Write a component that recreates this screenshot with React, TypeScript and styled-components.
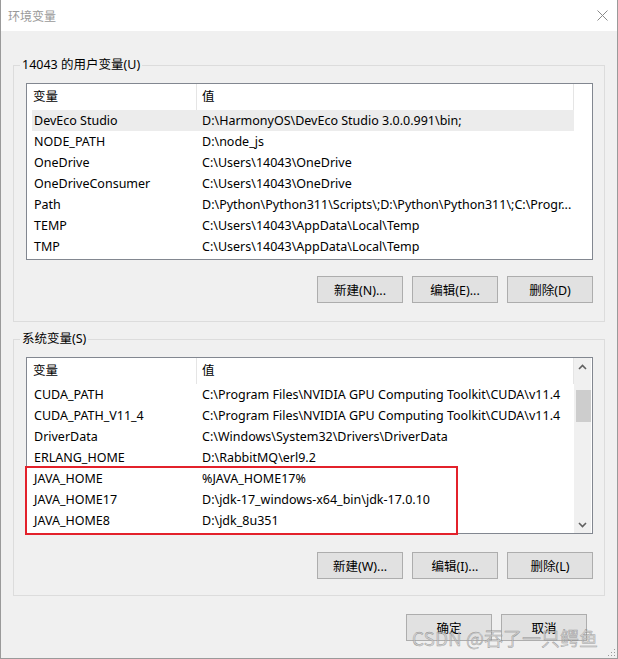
import styled, { createGlobalStyle } from 'styled-components'

const GlobalStyle = createGlobalStyle`
  html, body {
    margin: 0;
    padding: 0;
    background: #ffffff;
  }
  body {
    font-family: "Noto Sans", "Noto Sans CJK SC", sans-serif;
    font-size: 12.5px;
    color: #000000;
  }
`

const Window = styled.div`
  position: relative;
  width: 618px;
  height: 659px;
  box-sizing: border-box;
  border-left: 1px solid #9a9a9a;
  border-right: 1px solid #9a9a9a;
  border-bottom: 1px solid #9a9a9a;
  background: #f0f0f0;
  display: flex;
  flex-direction: column;
`

const TitleBar = styled.div`
  height: 31px;
  flex: none;
  background: #ffffff;
  display: flex;
  align-items: center;
  justify-content: space-between;
  padding: 0 9px 0 7px;
`

const TitleText = styled.span`
  color: #999999;
  font-size: 12px;
  line-height: 16px;
  font-family: "Noto Sans CJK SC", sans-serif;
`

const Body = styled.div`
  flex: 1;
  padding: 26px 12px 0 12px;
  display: flex;
  flex-direction: column;
`

const Group = styled.fieldset<{ $gap?: number }>`
  margin: ${(p) => p.$gap ?? 0}px 0 0 0;
  width: 592px;
  min-width: 0;
  box-sizing: border-box;
  border: 1px solid #dcdcdc;
  padding: 10px 11px ${(p) => (p.$gap ? 16 : 18)}px 12px;
`

const Legend = styled.legend`
  margin-left: -6px;
  padding: 0 2px;
  line-height: 16px;
  font-size: 12.5px;
  font-family: "Noto Sans", "Noto Sans CJK SC", sans-serif;
`

const List = styled.div`
  position: relative;
  height: 177px;
  box-sizing: border-box;
  border: 1px solid #828790;
  background: #ffffff;
  display: flex;
`

const ListContent = styled.div`
  width: 547px;
  flex: none;
  padding-bottom: 2px;
`

const HeaderRow = styled.div`
  display: flex;
  height: 26px;
`

const HeaderCell = styled.div<{ $w?: number; $pad: number }>`
  ${(p) => (p.$w ? `width: ${p.$w}px; flex: none;` : 'flex: 1;')}
  box-sizing: border-box;
  border-right: 1px solid #e5e5e5;
  padding-left: ${(p) => p.$pad}px;
  line-height: 26px;
  white-space: nowrap;
`

const Row = styled.div<{ $selected?: boolean }>`
  display: flex;
  height: 21px;
  margin-left: 5px;
  background: ${(p) => (p.$selected ? '#ececec' : 'transparent')};
  line-height: 21px;
  white-space: nowrap;
`

const NameCell = styled.div`
  width: 168px;
  flex: none;
  padding-left: 2px;
  box-sizing: border-box;
  overflow: hidden;
`

const ValueCell = styled.div`
  flex: 1;
  padding-left: 2px;
  overflow: hidden;
`

const ScrollArea = styled.div<{ $bar?: boolean }>`
  flex: 1;
  display: flex;
  flex-direction: column;
  background: ${(p) => (p.$bar ? '#f0f0f0' : '#ffffff')};
  margin-right: 1px;
`

const ArrowButton = styled.div`
  height: 17px;
  flex: none;
  display: flex;
  align-items: center;
  justify-content: center;
`

const Track = styled.div`
  flex: 1;
`

const Thumb = styled.div`
  margin: 15px 0 0 2px;
  width: 15px;
  height: 32px;
  background: #cdcdcd;
`

const Highlight = styled.div`
  position: absolute;
  left: -2px;
  top: 108px;
  width: 433px;
  height: 69px;
  box-sizing: border-box;
  border: 2px solid #e3212b;
  pointer-events: none;
`

const ButtonRow = styled.div<{ $top: number; $right?: number }>`
  display: flex;
  justify-content: flex-end;
  gap: 9px;
  margin-top: ${(p) => p.$top}px;
  padding-right: ${(p) => p.$right ?? 0}px;
`

const Button = styled.button`
  width: 86px;
  height: 27px;
  box-sizing: border-box;
  margin: 0;
  padding: 0;
  border: 1px solid #adadad;
  background: #e1e1e1;
  font-family: "Noto Sans", "Noto Sans CJK SC", sans-serif;
  font-size: 12.5px;
  color: #000000;
`

const Watermark = styled.div`
  position: absolute;
  left: 411px;
  top: 627px;
  font-family: "Noto Sans CJK SC", sans-serif;
  font-size: 19px;
  line-height: 22px;
  color: rgba(200, 200, 200, 0.7);
  -webkit-text-stroke: 0.4px rgba(110, 110, 110, 0.65);
  white-space: nowrap;
  pointer-events: none;
`

const Grip = styled.svg`
  position: absolute;
  right: 1px;
  bottom: 1px;
`

type Variable = { name: string; value: string }

const userVars: Variable[] = [
  { name: 'DevEco Studio', value: 'D:\\HarmonyOS\\DevEco Studio 3.0.0.991\\bin;' },
  { name: 'NODE_PATH', value: 'D:\\node_js' },
  { name: 'OneDrive', value: 'C:\\Users\\14043\\OneDrive' },
  { name: 'OneDriveConsumer', value: 'C:\\Users\\14043\\OneDrive' },
  {
    name: 'Path',
    value: 'D:\\Python\\Python311\\Scripts\\;D:\\Python\\Python311\\;C:\\Progr...',
  },
  { name: 'TEMP', value: 'C:\\Users\\14043\\AppData\\Local\\Temp' },
  { name: 'TMP', value: 'C:\\Users\\14043\\AppData\\Local\\Temp' },
]

const systemVars: Variable[] = [
  {
    name: 'CUDA_PATH',
    value: 'C:\\Program Files\\NVIDIA GPU Computing Toolkit\\CUDA\\v11.4',
  },
  {
    name: 'CUDA_PATH_V11_4',
    value: 'C:\\Program Files\\NVIDIA GPU Computing Toolkit\\CUDA\\v11.4',
  },
  { name: 'DriverData', value: 'C:\\Windows\\System32\\Drivers\\DriverData' },
  { name: 'ERLANG_HOME', value: 'D:\\RabbitMQ\\erl9.2' },
  { name: 'JAVA_HOME', value: '%JAVA_HOME17%' },
  { name: 'JAVA_HOME17', value: 'D:\\jdk-17_windows-x64_bin\\jdk-17.0.10' },
  { name: 'JAVA_HOME8', value: 'D:\\jdk_8u351' },
]

const Chevron = ({ down }: { down?: boolean }) => (
  <svg width="9" height="6" viewBox="0 0 9 6">
    <path
      d={down ? 'M1 1 L4.5 4.5 L8 1' : 'M1 5 L4.5 1.5 L8 5'}
      fill="none"
      stroke="#606060"
      strokeWidth="1.6"
    />
  </svg>
)

const VarList = ({
  items,
  selected,
  scrollbar,
  children,
}: {
  items: Variable[]
  selected?: number
  scrollbar?: boolean
  children?: React.ReactNode
}) => (
  <List>
    <ListContent>
      <HeaderRow>
        <HeaderCell $w={170} $pad={6}>
          变量
        </HeaderCell>
        <HeaderCell $pad={5}>值</HeaderCell>
      </HeaderRow>
      {items.map((v, i) => (
        <Row key={v.name} $selected={i === selected}>
          <NameCell>{v.name}</NameCell>
          <ValueCell>{v.value}</ValueCell>
        </Row>
      ))}
    </ListContent>
    <ScrollArea $bar={scrollbar}>
      {scrollbar && (
        <>
          <ArrowButton>
            <Chevron />
          </ArrowButton>
          <Track>
            <Thumb />
          </Track>
          <ArrowButton>
            <Chevron down />
          </ArrowButton>
        </>
      )}
    </ScrollArea>
    {children}
  </List>
)

const App = () => {
  return (
    <>
      <GlobalStyle />
      <Window>
        <TitleBar>
          <TitleText>环境变量</TitleText>
          <svg width="11" height="11" viewBox="0 0 11 11">
            <path d="M0.5 0.5 L10.5 10.5 M10.5 0.5 L0.5 10.5" stroke="#8a8a8a" strokeWidth="1" />
          </svg>
        </TitleBar>
        <Body>
          <Group>
            <Legend>14043 的用户变量(U)</Legend>
            <VarList items={userVars} selected={0} />
            <ButtonRow $top={16}>
              <Button>新建(N)...</Button>
              <Button>编辑(E)...</Button>
              <Button>删除(D)</Button>
            </ButtonRow>
          </Group>
          <Group $gap={9}>
            <Legend>系统变量(S)</Legend>
            <VarList items={systemVars} scrollbar>
              <Highlight />
            </VarList>
            <ButtonRow $top={18}>
              <Button>新建(W)...</Button>
              <Button>编辑(I)...</Button>
              <Button>删除(L)</Button>
            </ButtonRow>
          </Group>
          <ButtonRow $top={18} $right={18}>
            <Button>确定</Button>
            <Button>取消</Button>
          </ButtonRow>
        </Body>
        <Watermark>CSDN @吞了一只鳄鱼</Watermark>
        <Grip width="10" height="10" viewBox="0 0 10 10">
          <rect x="8" y="2" width="1" height="1" fill="#9a9a9a" />
          <rect x="5" y="5" width="1" height="1" fill="#9a9a9a" />
          <rect x="8" y="5" width="1" height="1" fill="#9a9a9a" />
          <rect x="2" y="8" width="1" height="1" fill="#9a9a9a" />
          <rect x="5" y="8" width="1" height="1" fill="#9a9a9a" />
          <rect x="8" y="8" width="1" height="1" fill="#9a9a9a" />
        </Grip>
      </Window>
    </>
  )
}

export default App
